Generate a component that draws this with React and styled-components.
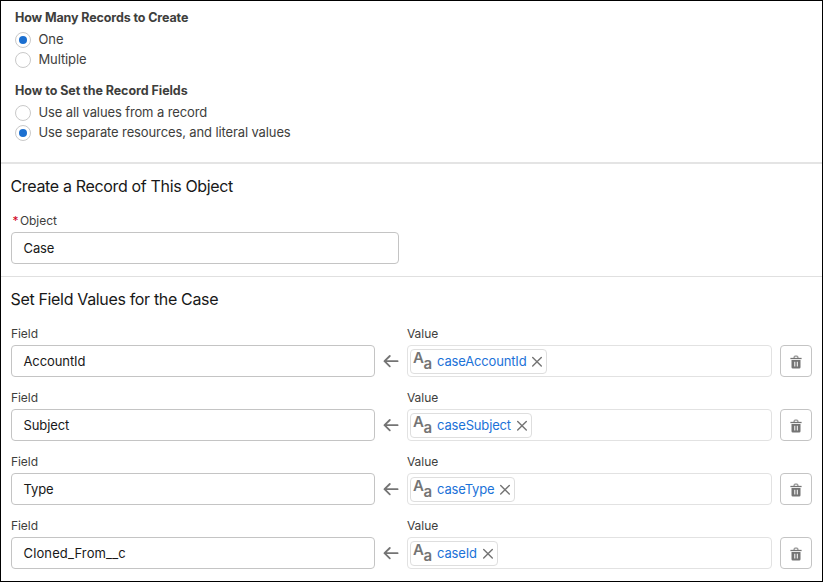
import React from 'react'
import styled, { createGlobalStyle } from 'styled-components'

const GlobalStyle = createGlobalStyle`
    * {
        box-sizing: border-box;
    }
    body {
        margin: 0;
        background-color: #fff;
        font-family: Inter, "Liberation Sans", sans-serif;
        font-size: 13px;
        color: #3e3e3c;
    }
`
const Panel = styled.div`
    width: 823px;
    height: 582px;
    border: 1px solid #000;
    overflow: hidden;
`
const Options = styled.section`
    height: 163px;
    padding: 7px 14px 0;
    border-bottom: 2px solid #e4e4e4;
`
const RadioGroup = styled.div`
    margin-bottom: 11px;
`
const Legend = styled.div`
    height: 22px;
    line-height: 20px;
    font-size: 12.5px;
    font-weight: 700;
    letter-spacing: ${props => props.$spacing};
    white-space: nowrap;
`
const RadioLabel = styled.label`
    display: flex;
    align-items: center;
    height: 20px;
    letter-spacing: -0.12px;
    white-space: nowrap;
`
const RadioText = styled.span`
    padding-bottom: 2px;
`
const Radio = styled.span`
    display: flex;
    align-items: center;
    justify-content: center;
    width: 16px;
    height: 16px;
    margin-right: 7.5px;
    border: 1px solid #c9c9c9;
    border-radius: 50%;
    &::after {
        content: '';
        width: 8px;
        height: 8px;
        border-radius: 50%;
        background-color: ${props => (props.$checked ? '#1b6fd0' : 'transparent')};
    }
`
const ObjectSection = styled.section`
    height: 113px;
    padding: 10px 10px 0;
    border-bottom: 1px solid #e0e0e0;
`
const FieldsSection = styled.section`
    padding: 10px 10px 0;
`
const Heading = styled.h2`
    margin: 0 0 0 -0.5px;
    height: 38px;
    line-height: 24px;
    font-size: 16px;
    font-weight: 400;
    letter-spacing: -0.34px;
    color: #181818;
    white-space: nowrap;
`
const Label = styled.div`
    height: 20px;
    line-height: 18px;
    font-size: 12px;
    letter-spacing: -0.06px;
`
const Required = styled.abbr`
    margin: 0 1.5px 0 1.5px;
    color: #d0021b;
`
const Input = styled.div`
    grid-column: 1;
    display: flex;
    align-items: center;
    width: ${props => props.$width};
    height: 32px;
    padding: 0 11.5px;
    border: 1px solid #c4c4c4;
    border-radius: 4px;
    color: #181818;
    letter-spacing: ${props => props.$spacing || '-0.1px'};
`
const Row = styled.div`
    display: grid;
    grid-template-columns: 364px 32px 365px 40px;
    grid-template-rows: 20px 32px;
    height: 64px;
`
const ValueLabel = styled(Label)`
    grid-column: 3;
`
const Arrow = styled.div`
    display: flex;
    align-items: center;
    justify-content: center;
`
const ValueBox = styled.div`
    display: flex;
    align-items: center;
    padding: 0 2px;
    border: 1px solid #e2e2e2;
    border-radius: 4px;
`
const Pill = styled.div`
    display: flex;
    align-items: center;
    width: ${props => props.$width}px;
    height: 25px;
    padding: 0 4px 0 2px;
    border: 1px solid #dedede;
    border-radius: 4px;
    color: #1b72d8;
    letter-spacing: -0.16px;
    svg {
        margin-left: auto;
    }
`
const TextType = styled.span`
    display: flex;
    flex: none;
    width: 24px;
    height: 23px;
    line-height: 15px;
    font-size: 15px;
    font-weight: 600;
    letter-spacing: 0;
    color: #747474;
    .small {
        margin: 6px 0 0 -0.5px;
    }
`
const DeleteButton = styled.button`
    display: flex;
    align-items: center;
    justify-content: center;
    width: 32px;
    height: 32px;
    margin-left: 8px;
    padding: 2px 0 0;
    border: 1px solid #c4c4c4;
    border-radius: 4px;
    background-color: #fff;
`

const ArrowIcon = () => (
    <svg width="16" height="14" viewBox="0 0 16 14" fill="none" stroke="#747474" strokeWidth="1.8" strokeLinecap="round" strokeLinejoin="round">
        <path d="M14.6 7.2H1.5M6.8 2L1.5 7.2L6.8 12.4" />
    </svg>
)

const CloseIcon = () => (
    <svg width="10" height="11" viewBox="0 0 10 11" stroke="#747474" strokeWidth="1.4" strokeLinecap="round">
        <path d="M.7 1.5L9.3 10.1M9.3 1.5L.7 10.1" />
    </svg>
)

const TrashIcon = () => (
    <svg width="12" height="14" viewBox="0 0 12 14" fill="none" stroke="#747474">
        <path d="M.4 3.5H11.6" strokeWidth="1.3" />
        <path d="M4.1 3V1.9Q4.1 1.1 4.9 1.1H7.1Q7.9 1.1 7.9 1.9V3" strokeWidth="1" />
        <path d="M1.5 5H10.5V12.2Q10.5 13.5 9.2 13.5H2.8Q1.5 13.5 1.5 12.2ZM4.3 6.7V11.4H5.3V6.7ZM6.8 6.7V11.4H7.8V6.7Z" fill="#747474" fillRule="evenodd" stroke="none" />
    </svg>
)

const assignments = [
    { field: 'AccountId', value: 'caseAccountId', width: 137 },
    { field: 'Subject', value: 'caseSubject', width: 122 },
    { field: 'Type', value: 'caseType', width: 105 },
    { field: 'Cloned_From__c', value: 'caseId', width: 88, spacing: '0.13px' },
]

const App = () => {
    return (
        <Panel>
            <GlobalStyle />
            <Options>
                <RadioGroup>
                    <Legend $spacing="-0.12px">How Many Records to Create</Legend>
                    <RadioLabel><Radio $checked /><RadioText>One</RadioText></RadioLabel>
                    <RadioLabel><Radio /><RadioText>Multiple</RadioText></RadioLabel>
                </RadioGroup>
                <RadioGroup>
                    <Legend $spacing="-0.05px">How to Set the Record Fields</Legend>
                    <RadioLabel><Radio /><RadioText>Use all values from a record</RadioText></RadioLabel>
                    <RadioLabel><Radio $checked /><RadioText>Use separate resources, and literal values</RadioText></RadioLabel>
                </RadioGroup>
            </Options>
            <ObjectSection>
                <Heading>Create a Record of This Object</Heading>
                <Label><Required>*</Required>Object</Label>
                <Input $width="388px">Case</Input>
            </ObjectSection>
            <FieldsSection>
                <Heading>Set Field Values for the Case</Heading>
                {assignments.map(item => (
                    <Row key={item.field}>
                        <Label>Field</Label>
                        <ValueLabel>Value</ValueLabel>
                        <Input $width="364px" $spacing={item.spacing}>{item.field}</Input>
                        <Arrow><ArrowIcon /></Arrow>
                        <ValueBox>
                            <Pill $width={item.width}>
                                <TextType>A<span className="small">a</span></TextType>
                                {item.value}
                                <CloseIcon />
                            </Pill>
                        </ValueBox>
                        <DeleteButton aria-label="Delete"><TrashIcon /></DeleteButton>
                    </Row>
                ))}
            </FieldsSection>
        </Panel>
    )
}

export default App
